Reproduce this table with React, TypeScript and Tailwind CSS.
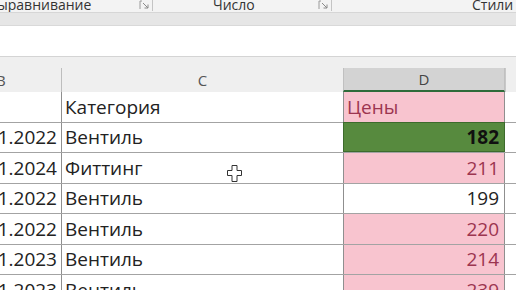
import React from "react";

const font = { fontFamily: '"Open Sans", "Noto Sans", sans-serif' };

function Launcher() {
  return (
    <svg width="16" height="11" viewBox="0 0 16 11" className="block">
      <path d="M1 1 V9 M1 1 H3" stroke="#9a9a9a" strokeWidth="1" fill="none" />
      <path d="M4 3 L9 8 M9 4.5 V8 H5.5" stroke="#8a8a8a" strokeWidth="1" fill="none" />
      <path d="M13.5 0 V11" stroke="#c4c4c4" strokeWidth="1" fill="none" />
    </svg>
  );
}

type Row = { b: string; c: string; d: string; kind: "pinkText" | "green" | "pink" | "white"; h: string };

const rows: Row[] = [
  { b: "", c: "Категория", d: "Цены", kind: "pinkText", h: "h-[31px]" },
  { b: "11.01.2022", c: "Вентиль", d: "182", kind: "green", h: "h-[30px]" },
  { b: "11.01.2024", c: "Фиттинг", d: "211", kind: "pink", h: "h-[31px]" },
  { b: "11.01.2022", c: "Вентиль", d: "199", kind: "white", h: "h-[30px]" },
  { b: "11.01.2022", c: "Вентиль", d: "220", kind: "pink", h: "h-[31px]" },
  { b: "12.01.2023", c: "Вентиль", d: "214", kind: "pink", h: "h-[30px]" },
  { b: "12.01.2023", c: "Вентиль", d: "239", kind: "pink", h: "h-[31px]" },
];

function DCell({ r }: { r: Row }) {
  if (r.kind === "pinkText")
    return (
      <div className="w-[162px] h-full bg-[#f8c4cf] border-x border-[#8f8f8f] flex items-center pl-[3px] text-[#9c3550]">
        {r.d}
      </div>
    );
  if (r.kind === "green")
    return (
      <div className="w-[162px] h-[calc(100%+1px)] -mt-px bg-[#578a3e] border border-[#3d6b2c] flex items-center justify-end pr-[5px] font-bold text-[#101010]">
        {r.d}
      </div>
    );
  if (r.kind === "pink")
    return (
      <div className="w-[162px] h-full bg-[#f8c4cf] border-x border-[#8f8f8f] flex items-center justify-end pr-[5px] text-[#9c3550]">
        {r.d}
      </div>
    );
  return (
    <div className="w-[162px] h-full bg-white border-x border-[#8f8f8f] flex items-center justify-end pr-[5px] text-[#222]">
      {r.d}
    </div>
  );
}

export default function App() {
  return (
    <div className="relative w-[516px] h-[290px] overflow-hidden bg-white" style={font}>
      {/* ribbon group labels */}
      <div className="h-[12px] bg-[#f3f3f3] text-[14px] leading-none font-medium text-[#333] overflow-hidden">
        <div className="relative w-full h-full">
          <span className="absolute left-[-3px] top-[-2px]">ыравнивание</span>
          <span className="absolute left-[139px] top-[0px]"><Launcher /></span>
          <span className="absolute left-[213px] top-[-2px]">Число</span>
          <span className="absolute left-[318px] top-[0px]"><Launcher /></span>
          <span className="absolute left-[472px] top-[-2px]">Стили</span>
        </div>
      </div>
      <div className="h-[13px] bg-[#e6e6e6] border-t border-[#d6d6d6]" />
      <div className="h-[31px] bg-white border-t border-[#d9d9d9]" />
      {/* column headers */}
      <div className="h-[36px] bg-[#efefef] border-t border-[#d4d4d4] flex flex-col">
        <div className="h-[12px]" />
        <div className="flex-1 flex text-[15px] text-[#555]">
          <div className="w-[61px] flex items-center overflow-hidden">
            <span className="-ml-[4px]">B</span>
          </div>
          <div className="w-[282px] border-l border-[#bdbdbd] flex items-center justify-center">C</div>
          <div className="w-[162px] bg-[#d3d3d3] border-b-2 border-[#2f6b3a] border-x border-x-[#c0c0c0] flex items-center justify-center text-[#444]">
            D
          </div>
          <div className="flex-1 border-l border-[#c8c8c8]" />
        </div>
      </div>
      {/* rows */}
      <div className="flex flex-col text-[19px] leading-none text-[#222]">
        {rows.map((r, i) => (
          <div key={i} className={`${r.h} flex border-b border-[#a3a3a3]`}>
            <div className="w-[61px] h-full overflow-hidden flex items-center justify-end pr-[4px] whitespace-nowrap">
              {r.b}
            </div>
            <div className="w-[282px] h-full border-l border-[#8f8f8f] flex items-center pl-[3px]">{r.c}</div>
            <DCell r={r} />
            <div className="flex-1" />
          </div>
        ))}
      </div>
      {/* cursor */}
      <svg className="absolute left-[227px] top-[165px]" width="15" height="17" viewBox="0 0 15 17">
        <path
          d="M5 0.5 H10 V5.5 H14.5 V10.5 H10 V16.5 H5 V10.5 H0.5 V5.5 H5 Z"
          fill="white"
          stroke="#333"
          strokeWidth="1"
        />
      </svg>
    </div>
  );
}
